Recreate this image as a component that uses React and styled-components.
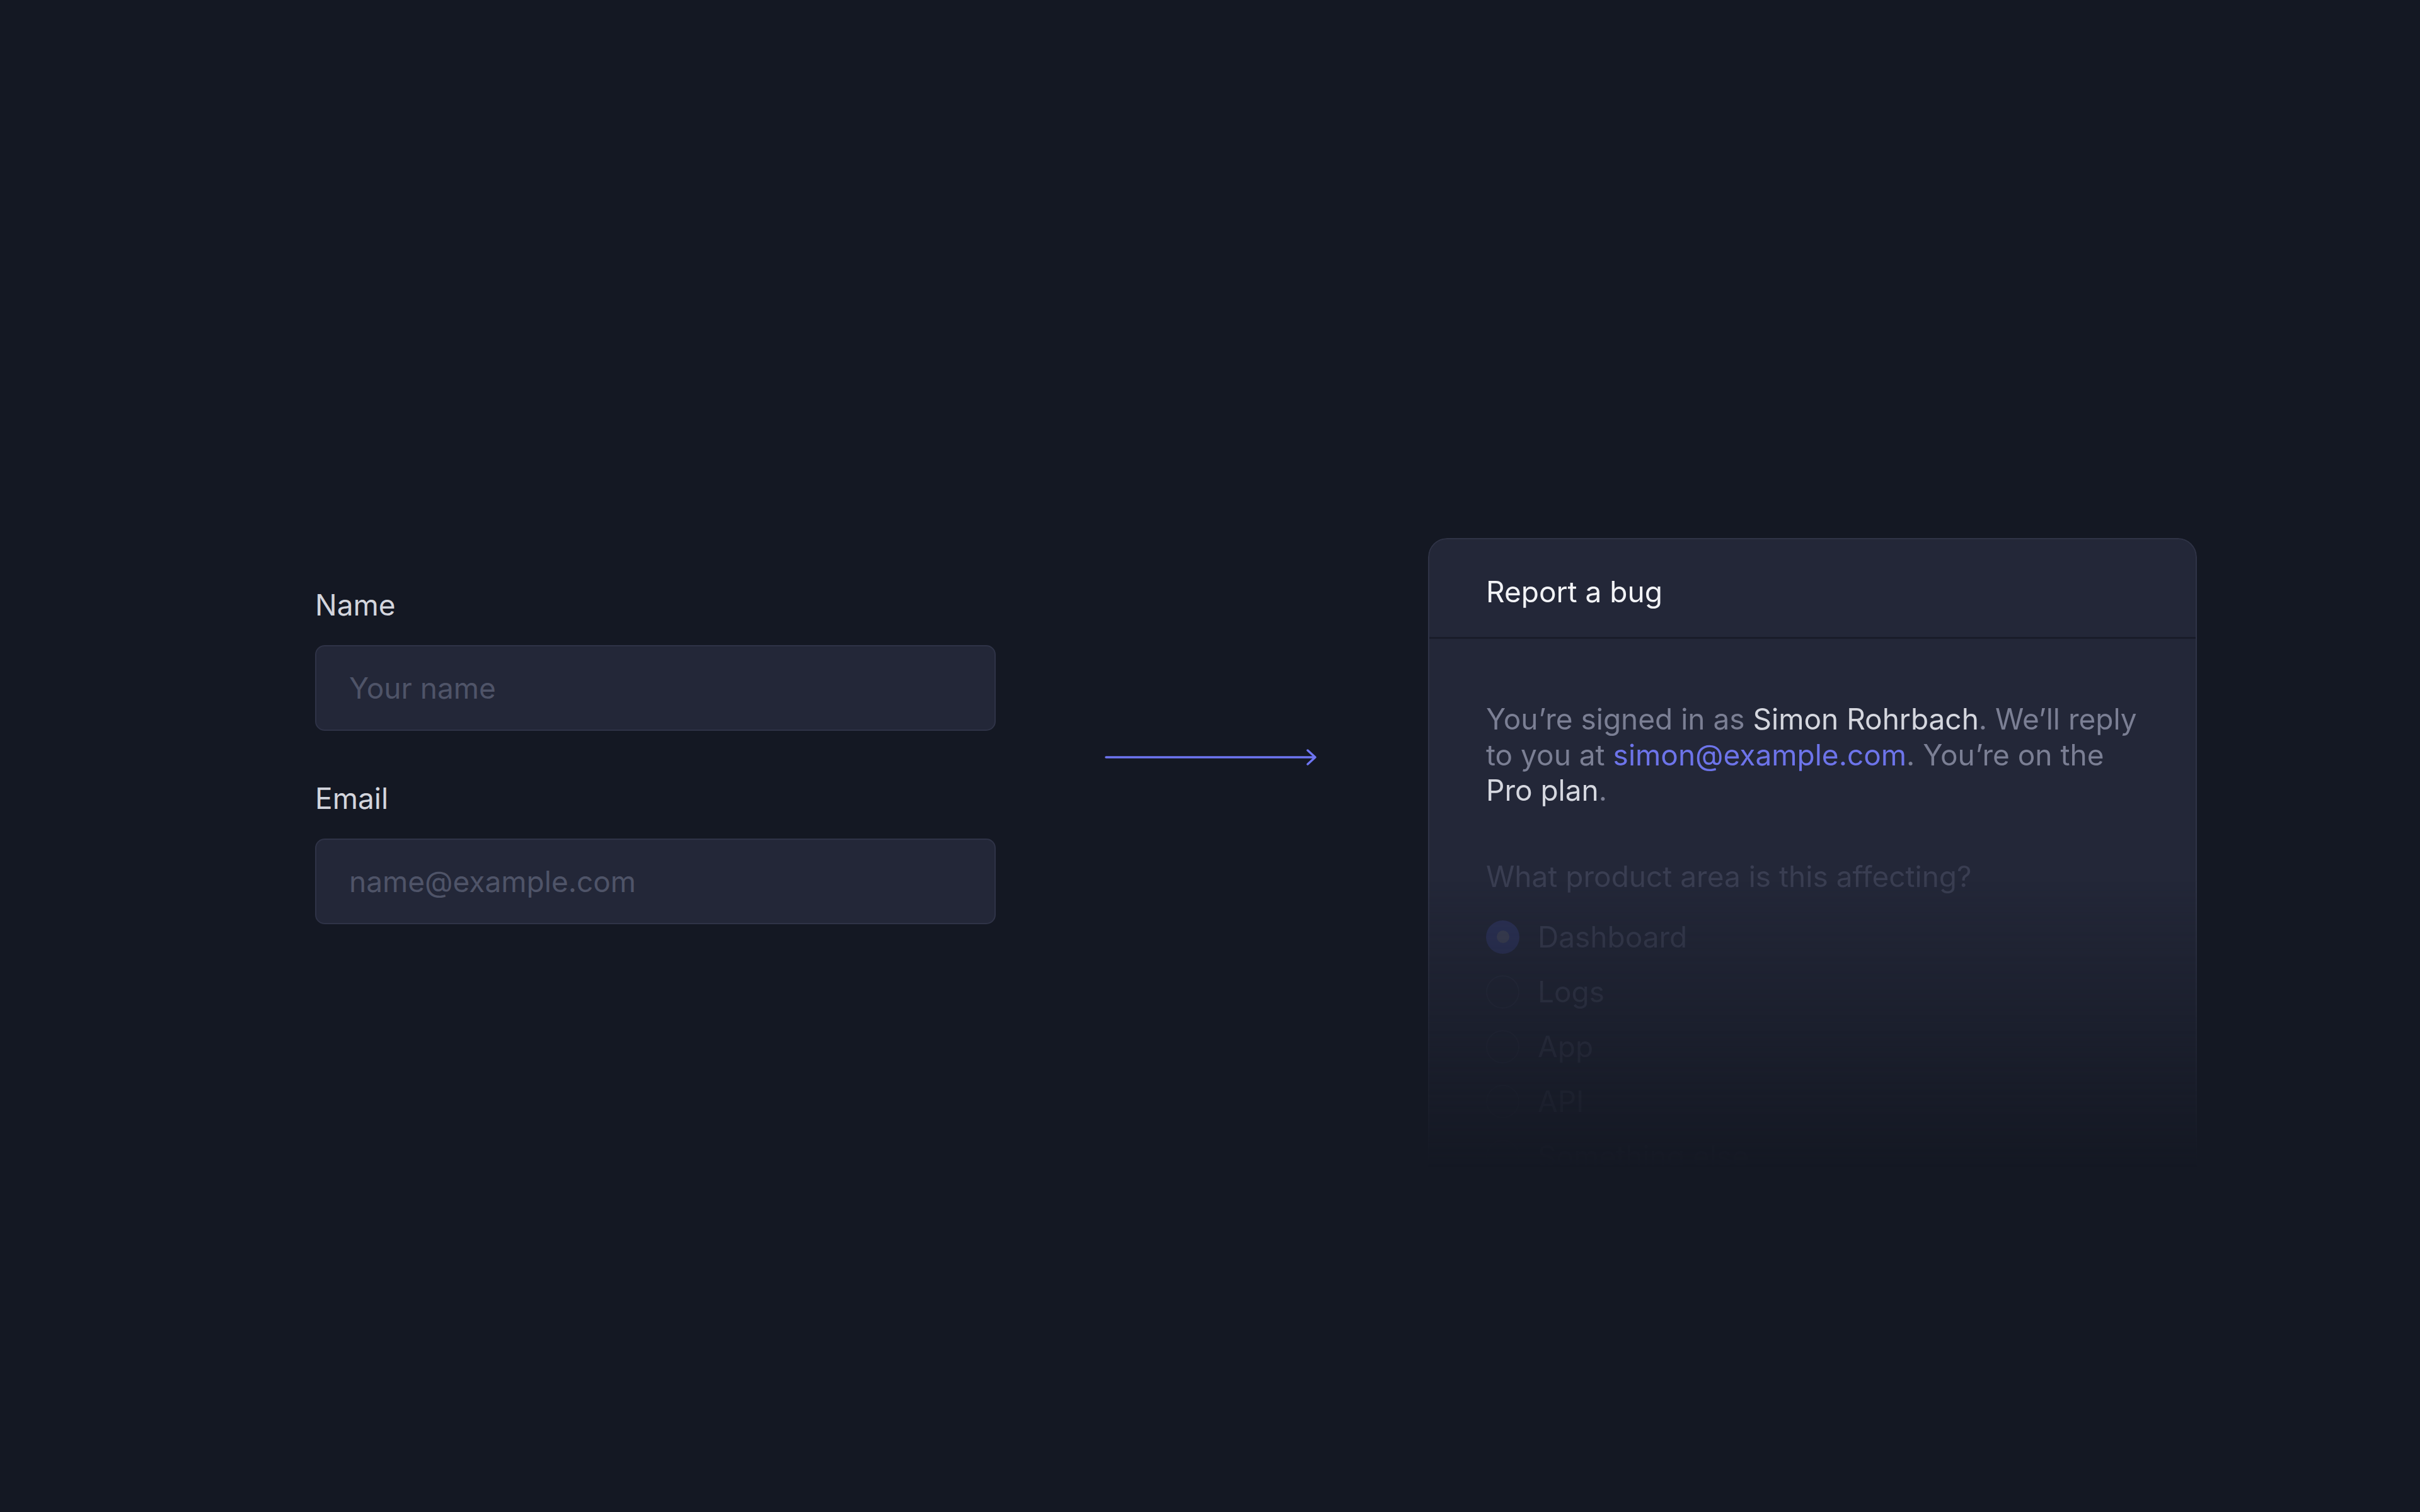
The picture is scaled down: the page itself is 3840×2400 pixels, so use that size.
import React from "react";
import styled, { createGlobalStyle } from "styled-components";

const GlobalStyle = createGlobalStyle`
  html, body {
    margin: 0;
    padding: 0;
    background: #141823;
  }
  * {
    box-sizing: border-box;
  }
`;

const Page = styled.div`
  min-height: 2400px;
  width: 3840px;
  background: #141823;
  font-family: Inter, "Noto Sans", sans-serif;
  padding: 854px 0 0 500px;
  display: flex;
  align-items: flex-start;
`;

const Lead = styled.div`
  display: flex;
  align-items: center;
  gap: 173px;
  margin-top: 72px;
`;

const Form = styled.form`
  width: 1080px;
  display: flex;
  flex-direction: column;
  gap: 73px;
`;

const Field = styled.div`
  display: flex;
  flex-direction: column;
  gap: 30px;
`;

const Label = styled.label`
  font-size: 46px;
  line-height: 68px;
  color: #d3d5dd;
`;

const Input = styled.input`
  height: 136px;
  width: 100%;
  background: #232738;
  border: 2px solid #2f3347;
  border-radius: 15px;
  padding: 0 52px;
  font-family: Inter, "Noto Sans", sans-serif;
  font-size: 46px;
  color: #d3d5dd;
  outline: none;

  &::placeholder {
    color: #4f5468;
  }
`;

const Arrow = styled.svg`
  display: block;
  flex: none;
  margin-top: 10px;
`;

const Card = styled.section`
  width: 1220px;
  height: 1120px;
  margin-left: 175px;
  background: #232738;
  border: 2px solid #2f3346;
  border-radius: 30px;
  box-shadow: 0 0 40px rgba(0, 0, 0, 0.25);
  overflow: hidden;
  -webkit-mask-image: linear-gradient(to bottom, #000 0, #000 540px, transparent 1000px);
  mask-image: linear-gradient(to bottom, #000 0, #000 540px, transparent 1000px);
`;

const CardHeader = styled.header`
  height: 158px;
  padding: 10px 90px 0;
  display: flex;
  align-items: center;
  border-bottom: 3px solid #191c29;
  font-size: 46px;
  color: #f2f3f6;
`;

const CardBody = styled.div`
  padding: 99px 90px;
`;

const Intro = styled.p`
  margin: 0;
  font-size: 46px;
  line-height: 56.5px;
  color: #7b7f94;
`;

const Strong = styled.span`
  color: #d5d7df;
`;

const Link = styled.span`
  color: #6d74ea;
`;

const Question = styled.div`
  margin-top: 80px;
  font-size: 46px;
  line-height: 56.5px;
  color: #3a3e52;
`;

const Options = styled.div`
  margin-top: 40px;
  display: flex;
  flex-direction: column;
  gap: 31px;
`;

const Option = styled.div`
  display: flex;
  align-items: center;
  gap: 29px;
  height: 56px;
  font-size: 46px;
  color: #383c50;
`;

const Radio = styled.span`
  width: 53px;
  height: 53px;
  border-radius: 50%;
  flex: none;
  display: flex;
  align-items: center;
  justify-content: center;
  background: ${p => (p.$checked ? "#2c3257" : "transparent")};
  border: ${p => (p.$checked ? "none" : "2px solid #292d3f")};

  &::after {
    content: "";
    display: ${p => (p.$checked ? "block" : "none")};
    width: 20px;
    height: 20px;
    border-radius: 50%;
    background: #3c4055;
  }
`;

const areas = ["Dashboard", "Logs", "App", "API", "Something else"];

export default function App() {
  return (
    <>
      <GlobalStyle />
      <Page>
        <Lead>
          <Form>
            <Field>
              <Label>Name</Label>
              <Input placeholder="Your name" />
            </Field>
            <Field>
              <Label>Email</Label>
              <Input placeholder="name@example.com" />
            </Field>
          </Form>
          <Arrow width="338" height="30" viewBox="0 0 338 30">
            <path
              d="M2 15 H334 M322 4 L334 15 L322 26"
              fill="none"
              stroke="#6e75f2"
              strokeWidth="3.5"
              strokeLinecap="round"
              strokeLinejoin="round"
            />
          </Arrow>
        </Lead>
        <Card>
          <CardHeader>Report a bug</CardHeader>
          <CardBody>
            <Intro>
              You’re signed in as <Strong>Simon Rohrbach</Strong>. We’ll reply to
              you at <Link>simon@example.com</Link>. You’re on the{" "}
              <Strong>Pro plan</Strong>.
            </Intro>
            <Question>What product area is this affecting?</Question>
            <Options>
              {areas.map((area, i) => (
                <Option key={area}>
                  <Radio $checked={i === 0} />
                  {area}
                </Option>
              ))}
            </Options>
          </CardBody>
        </Card>
      </Page>
    </>
  );
}
